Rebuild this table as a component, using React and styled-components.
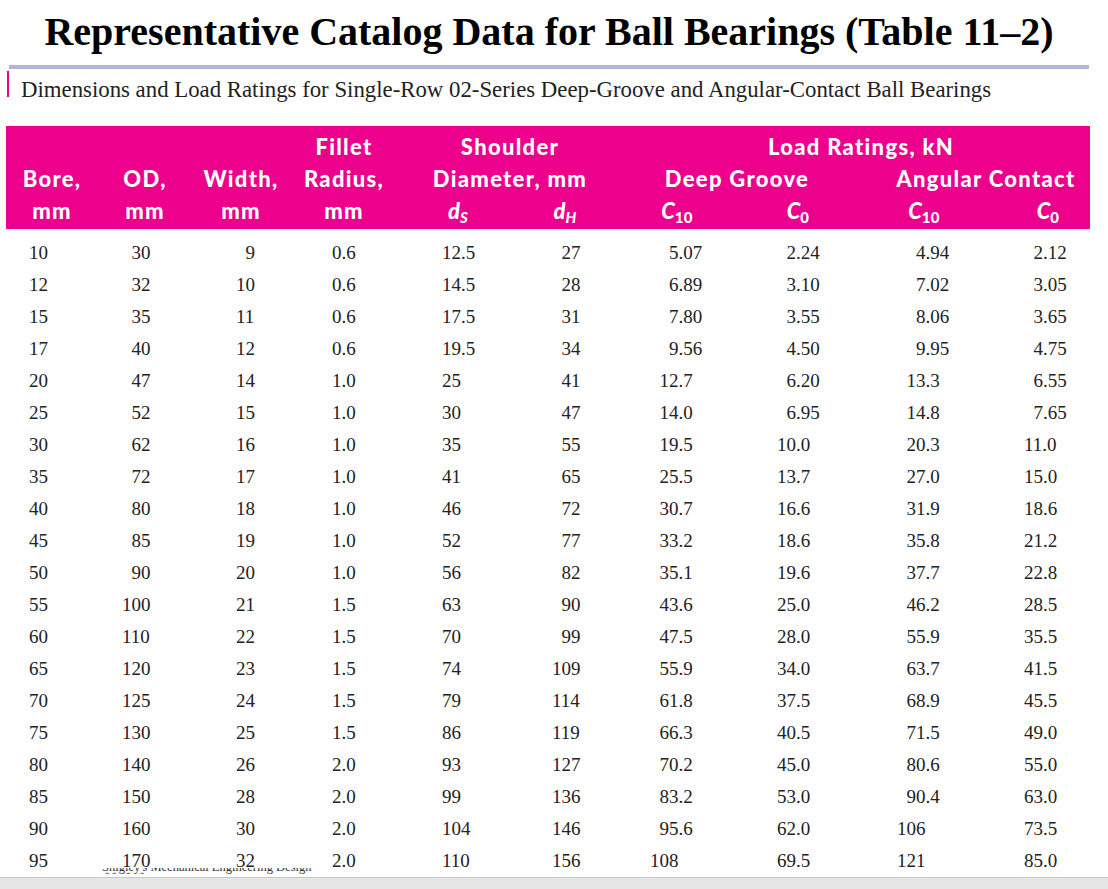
/// external ///
import React from 'react'
import styled, { createGlobalStyle } from 'styled-components'

/***************************************
  DATA
***************************************/

// track widths of the header grid (px), table is 1084 wide
const headTracks = '92px 94px 98px 108px 120px 94px 130px 112px 140px 96px'

// data grid: start offset + track widths, maxInt = digits before the point
const bodyTracks = '93px 114px 96px 110px 110px 98px 127px 120px 127px 66px'

const columns = [
  { key: 'bore', maxInt: 2 },
  { key: 'od', maxInt: 3 },
  { key: 'width', maxInt: 2 },
  { key: 'fillet', maxInt: 1 },
  { key: 'ds', maxInt: 0 },
  { key: 'dh', maxInt: 3 },
  { key: 'c10dg', maxInt: 3 },
  { key: 'c0dg', maxInt: 2 },
  { key: 'c10ac', maxInt: 3 },
  { key: 'c0ac', maxInt: 2 },
]

const rows = [
  ['10', '30', '9', '0.6', '12.5', '27', '5.07', '2.24', '4.94', '2.12'],
  ['12', '32', '10', '0.6', '14.5', '28', '6.89', '3.10', '7.02', '3.05'],
  ['15', '35', '11', '0.6', '17.5', '31', '7.80', '3.55', '8.06', '3.65'],
  ['17', '40', '12', '0.6', '19.5', '34', '9.56', '4.50', '9.95', '4.75'],
  ['20', '47', '14', '1.0', '25', '41', '12.7', '6.20', '13.3', '6.55'],
  ['25', '52', '15', '1.0', '30', '47', '14.0', '6.95', '14.8', '7.65'],
  ['30', '62', '16', '1.0', '35', '55', '19.5', '10.0', '20.3', '11.0'],
  ['35', '72', '17', '1.0', '41', '65', '25.5', '13.7', '27.0', '15.0'],
  ['40', '80', '18', '1.0', '46', '72', '30.7', '16.6', '31.9', '18.6'],
  ['45', '85', '19', '1.0', '52', '77', '33.2', '18.6', '35.8', '21.2'],
  ['50', '90', '20', '1.0', '56', '82', '35.1', '19.6', '37.7', '22.8'],
  ['55', '100', '21', '1.5', '63', '90', '43.6', '25.0', '46.2', '28.5'],
  ['60', '110', '22', '1.5', '70', '99', '47.5', '28.0', '55.9', '35.5'],
  ['65', '120', '23', '1.5', '74', '109', '55.9', '34.0', '63.7', '41.5'],
  ['70', '125', '24', '1.5', '79', '114', '61.8', '37.5', '68.9', '45.5'],
  ['75', '130', '25', '1.5', '86', '119', '66.3', '40.5', '71.5', '49.0'],
  ['80', '140', '26', '2.0', '93', '127', '70.2', '45.0', '80.6', '55.0'],
  ['85', '150', '28', '2.0', '99', '136', '83.2', '53.0', '90.4', '63.0'],
  ['90', '160', '30', '2.0', '104', '146', '95.6', '62.0', '106', '73.5'],
  ['95', '170', '32', '2.0', '110', '156', '108', '69.5', '121', '85.0'],
]

/***************************************
  COMPONENTS
***************************************/

const GlobalStyle = createGlobalStyle`
  html, body {
    margin: 0;
    padding: 0;
    background: #FFFFFF;
  }
  body {
    overflow: hidden;
  }
`

const Page = styled.div`
  width: 1108px;
  height: 889px;
  position: relative;
  overflow: hidden;
  background: #FFFFFF;
`

const Title = styled.h1`
  margin: 0;
  padding: 8px 10px 0 0;
  height: 48px;
  font-family: 'Liberation Serif', 'Times New Roman', serif;
  font-weight: 700;
  font-size: 40px;
  line-height: 48px;
  text-align: center;
  color: #000000;
`

const Rule = styled.div`
  margin: 9px 0 0 9px;
  width: 1080px;
  height: 4px;
  background: #AEB8D8;
`

const SubRow = styled.div`
  display: flex;
  align-items: flex-start;
  margin-top: 2px;
  height: 32px;
`

const SubMark = styled.span`
  display: block;
  margin-left: 7px;
  width: 2px;
  height: 26px;
  background: #EC008C;
`

const SubTitle = styled.p`
  margin: 0 0 0 12px;
  padding-top: 6px;
  font-family: 'Liberation Serif', 'Times New Roman', serif;
  font-size: 22.8px;
  line-height: 26px;
  color: #222222;
  white-space: nowrap;
`

const Table = styled.div`
  margin: 23px 0 0 6px;
  width: 1084px;
`

const Head = styled.div`
  display: grid;
  grid-template-columns: ${headTracks};
  grid-template-rows: repeat(3, 32px);
  padding: 5px 0 2px;
  background: #EC008C;
  color: #FFFFFF;
  font-family: Lato, 'Open Sans', sans-serif;
  font-weight: 900;
  font-size: 22px;
  letter-spacing: 1.3px;
`

const HeadCell = styled.div`
  grid-column: ${(p) => p.$col} / span ${(p) => p.$span || 1};
  grid-row: ${(p) => p.$row};
  padding-left: ${(p) => p.$shift || 0}px;
  text-align: center;
  line-height: 32px;
  white-space: nowrap;

  i {
    font-style: italic;
    letter-spacing: 0;
  }
  sub {
    font-size: 15px;
    letter-spacing: 0.3px;
    vertical-align: baseline;
    position: relative;
    top: 4px;
    font-style: ${(p) => (p.$italicSub ? 'italic' : 'normal')};
  }
`

const Body = styled.div`
  position: relative;
  display: grid;
  grid-template-columns: ${bodyTracks};
  grid-auto-rows: 32px;
  margin-top: 8px;
  padding-left: 23px;
  font-family: 'Liberation Serif', 'Times New Roman', serif;
  font-size: 19px;
  line-height: 32px;
  color: #222222;
`

const Cell = styled.div`
  padding-left: ${(p) => p.$pad * 0.5}em;
  white-space: nowrap;
`

const Ghost = styled.div`
  position: absolute;
  left: 96px;
  top: 631px;
  height: 6px;
  overflow: hidden;
  font-family: 'Liberation Serif', 'Times New Roman', serif;
  font-size: 12.5px;
  line-height: 12px;
  color: #333333;
  white-space: nowrap;

  span {
    display: block;
    margin-top: -7px;
  }
  u {
    text-decoration: underline wavy #E0403A;
    text-underline-offset: 1px;
  }
`

const Scrollbar = styled.div`
  position: absolute;
  left: 0;
  right: 0;
  bottom: 0;
  height: 11px;
  background: #E6E6E6;
  border-top: 1px solid #C8C8C8;
`

/***************************************
  MAIN
***************************************/

const intDigits = (v) => v.split ('.')[0].length

const App = () => {
  return (
    <Page>
      <GlobalStyle />
      <Title>Representative Catalog Data for Ball Bearings (Table 11–2)</Title>
      <Rule />
      <SubRow>
        <SubMark />
        <SubTitle>
          Dimensions and Load Ratings for Single-Row 02-Series Deep-Groove and Angular-Contact Ball Bearings
        </SubTitle>
      </SubRow>

      <Table>
        <Head>
          <HeadCell $col={4} $row={1}>Fillet</HeadCell>
          <HeadCell $col={5} $span={2} $row={1} $shift={10}>Shoulder</HeadCell>
          <HeadCell $col={7} $span={4} $row={1} $shift={20}>Load Ratings, kN</HeadCell>

          <HeadCell $col={1} $row={2}>Bore,</HeadCell>
          <HeadCell $col={2} $row={2}>OD,</HeadCell>
          <HeadCell $col={3} $row={2}>Width,</HeadCell>
          <HeadCell $col={4} $row={2}>Radius,</HeadCell>
          <HeadCell $col={5} $span={2} $row={2} $shift={10}>Diameter, mm</HeadCell>
          <HeadCell $col={7} $span={2} $row={2} $shift={8}>Deep Groove</HeadCell>
          <HeadCell $col={9} $span={2} $row={2} $shift={28}>Angular Contact</HeadCell>

          <HeadCell $col={1} $row={3}>mm</HeadCell>
          <HeadCell $col={2} $row={3}>mm</HeadCell>
          <HeadCell $col={3} $row={3}>mm</HeadCell>
          <HeadCell $col={4} $row={3}>mm</HeadCell>
          <HeadCell $col={5} $row={3} $italicSub><i>d</i><sub>S</sub></HeadCell>
          <HeadCell $col={6} $row={3} $italicSub><i>d</i><sub>H</sub></HeadCell>
          <HeadCell $col={7} $row={3}><i>C</i><sub>10</sub></HeadCell>
          <HeadCell $col={8} $row={3}><i>C</i><sub>0</sub></HeadCell>
          <HeadCell $col={9} $row={3}><i>C</i><sub>10</sub></HeadCell>
          <HeadCell $col={10} $row={3} $shift={12}><i>C</i><sub>0</sub></HeadCell>
        </Head>

        <Body>
          {rows.map ((row, r) =>
            row.map ((v, c) => (
              <Cell
                key={`${r}-${columns[c].key}`}
                $pad={columns[c].maxInt ? columns[c].maxInt - intDigits (v) : 0}
              >
                {v}
              </Cell>
            ))
          )}
          <Ghost>
            <span><u>Shigley's</u> Mechanical Engineering Design</span>
          </Ghost>
        </Body>
      </Table>

      <Scrollbar />
    </Page>
  )
}

/**************************************/

export default App
